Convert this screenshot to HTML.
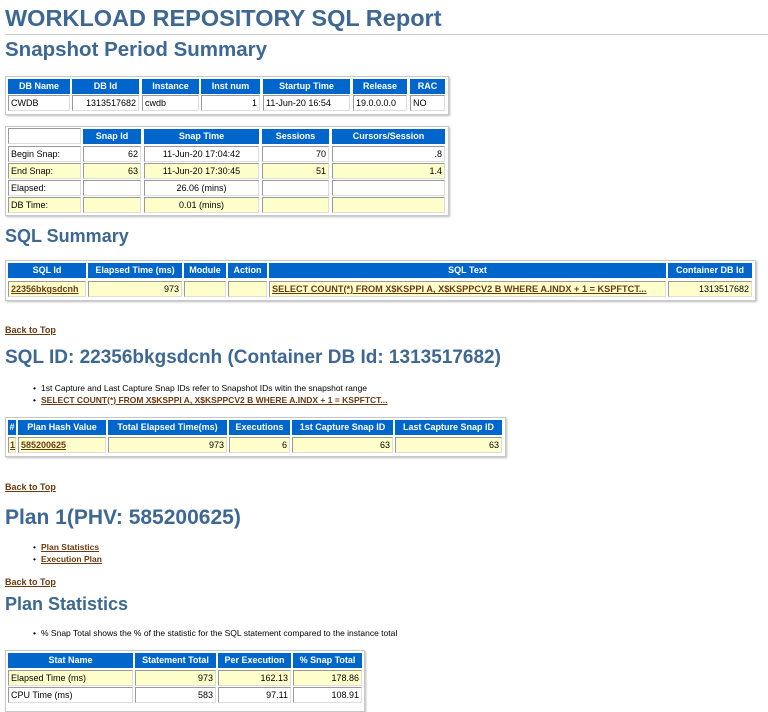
<!DOCTYPE html>
<html><head><meta charset="utf-8"><style>
body{margin:0;width:768px;height:702px;overflow:hidden;background:#fff;font-family:"Liberation Sans",sans-serif;position:relative}
.a{position:absolute;white-space:nowrap}
.t{position:absolute;border:1px solid #c8c8c8;box-shadow:1px 1px 2px #bbb;background:#fff}
.c{position:absolute;box-sizing:border-box;font-size:9px;line-height:14px;padding:0 2px;white-space:nowrap;overflow:hidden;color:#000}
.h{background:#0066cc;color:#fff;font-weight:bold;text-align:center;height:15px;line-height:15px}
.d{border:1px solid #999;border-right-color:#ddd;border-bottom-color:#ddd;background:#fff;height:16px}
.y{background:#ffffcc}
.r{text-align:right}.m{text-align:center}
.hd{color:#3d6893;font-weight:bold}
a,.l{color:#6b3a10;text-decoration:underline;font-weight:bold}
.bt{font-size:9px}
.li{font-size:8.5px;color:#000}
.li:before{content:"•";position:absolute;left:-8px}
</style></head><body>
<div class="a hd" style="left:5px;top:5px;font-size:23.5px">WORKLOAD REPOSITORY SQL Report</div>
<div class="a" style="left:5px;top:34px;width:763px;height:1px;background:#ccc"></div>
<div class="a hd" style="left:5px;top:38px;font-size:20.5px">Snapshot Period Summary</div>

<div class="t" style="left:5px;top:76px;width:442px;height:37px"></div>
<div class="c h" style="left:8px;top:79px;width:62px">DB Name</div>
<div class="c h" style="left:72px;top:79px;width:67px">DB Id</div>
<div class="c h" style="left:142px;top:79px;width:57px">Instance</div>
<div class="c h" style="left:201px;top:79px;width:59px">Inst num</div>
<div class="c h" style="left:263px;top:79px;width:87px">Startup Time</div>
<div class="c h" style="left:353px;top:79px;width:54px">Release</div>
<div class="c h" style="left:410px;top:79px;width:35px">RAC</div>
<div class="c d" style="left:8px;top:95px;width:62px">CWDB</div>
<div class="c d r" style="left:72px;top:95px;width:67px">1313517682</div>
<div class="c d" style="left:142px;top:95px;width:57px">cwdb</div>
<div class="c d r" style="left:201px;top:95px;width:59px">1</div>
<div class="c d" style="left:263px;top:95px;width:87px">11-Jun-20 16:54</div>
<div class="c d" style="left:353px;top:95px;width:54px">19.0.0.0.0</div>
<div class="c d" style="left:410px;top:95px;width:35px">NO</div>

<div class="t" style="left:5px;top:126px;width:442px;height:88px"></div>
<div class="c d" style="left:8px;top:128px;width:73px"></div>
<div class="c h" style="left:83px;top:129px;width:58px">Snap Id</div>
<div class="c h" style="left:144px;top:129px;width:115px">Snap Time</div>
<div class="c h" style="left:262px;top:129px;width:67px">Sessions</div>
<div class="c h" style="left:332px;top:129px;width:113px">Cursors/Session</div>
<div class="c d" style="left:8px;top:146px;width:73px">Begin Snap:</div>
<div class="c d r" style="left:83px;top:146px;width:58px">62</div>
<div class="c d m" style="left:144px;top:146px;width:115px">11-Jun-20 17:04:42</div>
<div class="c d r" style="left:262px;top:146px;width:67px">70</div>
<div class="c d r" style="left:332px;top:146px;width:113px">.8</div>
<div class="c d y" style="left:8px;top:163px;width:73px">End Snap:</div>
<div class="c d y r" style="left:83px;top:163px;width:58px">63</div>
<div class="c d y m" style="left:144px;top:163px;width:115px">11-Jun-20 17:30:45</div>
<div class="c d y r" style="left:262px;top:163px;width:67px">51</div>
<div class="c d y r" style="left:332px;top:163px;width:113px">1.4</div>
<div class="c d" style="left:8px;top:180px;width:73px">Elapsed:</div>
<div class="c d" style="left:83px;top:180px;width:58px"></div>
<div class="c d m" style="left:144px;top:180px;width:115px">26.06 (mins)</div>
<div class="c d" style="left:262px;top:180px;width:67px"></div>
<div class="c d" style="left:332px;top:180px;width:113px"></div>
<div class="c d y" style="left:8px;top:197px;width:73px">DB Time:</div>
<div class="c d y" style="left:83px;top:197px;width:58px"></div>
<div class="c d y m" style="left:144px;top:197px;width:115px">0.01 (mins)</div>
<div class="c d y" style="left:262px;top:197px;width:67px"></div>
<div class="c d y" style="left:332px;top:197px;width:113px"></div>

<div class="a hd" style="left:5px;top:226px;font-size:18px">SQL Summary</div>
<div class="t" style="left:5px;top:260px;width:749px;height:39px"></div>
<div class="c h" style="left:8px;top:263px;width:78px">SQL Id</div>
<div class="c h" style="left:88px;top:263px;width:94px">Elapsed Time (ms)</div>
<div class="c h" style="left:184px;top:263px;width:42px">Module</div>
<div class="c h" style="left:228px;top:263px;width:39px">Action</div>
<div class="c h" style="left:269px;top:263px;width:397px">SQL Text</div>
<div class="c h" style="left:668px;top:263px;width:84px">Container DB Id</div>
<div class="c d y" style="left:8px;top:281px;width:78px"><span class="l">22356bkgsdcnh</span></div>
<div class="c d y r" style="left:88px;top:281px;width:94px">973</div>
<div class="c d y" style="left:184px;top:281px;width:42px"></div>
<div class="c d y" style="left:228px;top:281px;width:39px"></div>
<div class="c d y" style="left:269px;top:281px;width:397px"><span class="l" style="font-size:9.2px">SELECT COUNT(*) FROM X$KSPPI A, X$KSPPCV2 B WHERE A.INDX + 1 = KSPFTCT...</span></div>
<div class="c d y r" style="left:668px;top:281px;width:84px">1313517682</div>

<div class="a bt l" style="left:5px;top:325px">Back to Top</div>
<div class="a hd" style="left:5px;top:347px;font-size:19px">SQL ID: 22356bkgsdcnh (Container DB Id: 1313517682)</div>
<div class="a li" style="left:41px;top:383px">1st Capture and Last Capture Snap IDs refer to Snapshot IDs witin the snapshot range</div>
<div class="a li" style="left:41px;top:395px"><span class="l">SELECT COUNT(*) FROM X$KSPPI A, X$KSPPCV2 B WHERE A.INDX + 1 = KSPFTCT...</span></div>

<div class="t" style="left:5px;top:417px;width:499px;height:38px"></div>
<div class="c h" style="left:8px;top:420px;width:8px;padding:0">#</div>
<div class="c h" style="left:18px;top:420px;width:88px">Plan Hash Value</div>
<div class="c h" style="left:108px;top:420px;width:119px">Total Elapsed Time(ms)</div>
<div class="c h" style="left:229px;top:420px;width:61px">Executions</div>
<div class="c h" style="left:292px;top:420px;width:101px">1st Capture Snap ID</div>
<div class="c h" style="left:395px;top:420px;width:107px">Last Capture Snap ID</div>
<div class="c d y" style="left:8px;top:437px;width:8px;padding:0 1px"><span class="l">1</span></div>
<div class="c d y" style="left:18px;top:437px;width:88px"><span class="l">585200625</span></div>
<div class="c d y r" style="left:108px;top:437px;width:119px">973</div>
<div class="c d y r" style="left:229px;top:437px;width:61px">6</div>
<div class="c d y r" style="left:292px;top:437px;width:101px">63</div>
<div class="c d y r" style="left:395px;top:437px;width:107px">63</div>

<div class="a bt l" style="left:5px;top:482px">Back to Top</div>
<div class="a hd" style="left:5px;top:506px;font-size:21px">Plan 1(PHV: 585200625)</div>
<div class="a li" style="left:41px;top:542px"><span class="l">Plan Statistics</span></div>
<div class="a li" style="left:41px;top:554px"><span class="l">Execution Plan</span></div>
<div class="a bt l" style="left:5px;top:577px">Back to Top</div>
<div class="a hd" style="left:5px;top:594px;font-size:18px">Plan Statistics</div>
<div class="a li" style="left:41px;top:628px">% Snap Total shows the % of the statistic for the SQL statement compared to the instance total</div>

<div class="t" style="left:5px;top:650px;width:358px;height:60px"></div>
<div class="c h" style="left:8px;top:653px;width:125px">Stat Name</div>
<div class="c h" style="left:135px;top:653px;width:81px">Statement Total</div>
<div class="c h" style="left:218px;top:653px;width:73px">Per Execution</div>
<div class="c h" style="left:293px;top:653px;width:69px">% Snap Total</div>
<div class="c d y" style="left:8px;top:670px;width:125px">Elapsed Time (ms)</div>
<div class="c d y r" style="left:135px;top:670px;width:81px">973</div>
<div class="c d y r" style="left:218px;top:670px;width:73px">162.13</div>
<div class="c d y r" style="left:293px;top:670px;width:69px">178.86</div>
<div class="c d" style="left:8px;top:687px;width:125px">CPU Time (ms)</div>
<div class="c d r" style="left:135px;top:687px;width:81px">583</div>
<div class="c d r" style="left:218px;top:687px;width:73px">97.11</div>
<div class="c d r" style="left:293px;top:687px;width:69px">108.91</div>
</body></html>
